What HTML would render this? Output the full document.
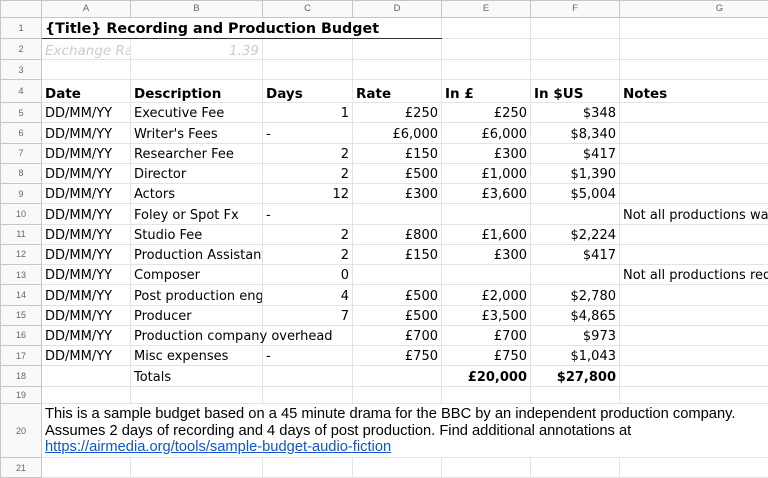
<!DOCTYPE html>
<html><head><meta charset="utf-8"><style>
body{margin:0;width:768px;height:462px;overflow:hidden;background:#fff;font-family:"DejaVu Sans",Verdana,sans-serif;}
table{border-collapse:collapse;table-layout:fixed;width:819px;}
td{border:1px solid #e2e3e3;padding:0 3px;white-space:nowrap;overflow:visible;font-size:13px;color:#000;vertical-align:bottom;line-height:16px;}
td.h{background:#f8f9fa;color:#666;font-size:9px;text-align:center;vertical-align:middle;border-color:#c4c7c5;font-family:"Liberation Sans",sans-serif;padding:0;}
tr.top td{background:#f8f9fa;color:#666;font-size:9.5px;text-align:center;vertical-align:middle;border-color:#c4c7c5;font-family:"Liberation Sans",sans-serif;height:16px;line-height:16px;}
.r{text-align:right}
.clip{overflow:hidden}
.b{font-weight:bold}
.hd td{font-weight:bold;font-size:13.5px;}
.title{font-weight:bold;font-size:14.3px;border-bottom:1.5px solid #333;line-height:18px;}
.ex{color:#ccc;font-style:italic;font-size:13.5px;}
.note{font-family:"Liberation Sans",sans-serif;font-size:14.7px;line-height:16.5px;vertical-align:middle;white-space:nowrap;overflow:hidden;}
a{color:#1155cc;}
</style></head><body>
<table>
<colgroup><col style="width:41px"><col style="width:89px"><col style="width:132px"><col style="width:90px"><col style="width:89px"><col style="width:89px"><col style="width:89px"><col style="width:200px"></colgroup>
<tr class="top"><td></td><td>A</td><td>B</td><td>C</td><td>D</td><td>E</td><td>F</td><td>G</td></tr>
<tr style="height:21px"><td class="h">1</td><td class="title" colspan="4">{Title} Recording and Production Budget</td><td></td><td></td><td></td></tr>
<tr style="height:21px"><td class="h">2</td><td class="ex clip">Exchange Rate</td><td class="ex r">1.39</td><td></td><td></td><td></td><td></td><td></td></tr>
<tr style="height:20px"><td class="h">3</td><td></td><td></td><td></td><td></td><td></td><td></td><td></td></tr>
<tr class="hd" style="height:23px"><td class="h" style="font-weight:normal;font-size:9px">4</td><td>Date</td><td>Description</td><td>Days</td><td>Rate</td><td>In £</td><td>In $US</td><td>Notes</td></tr>
<tr style="height:20.25px"><td class="h">5</td><td>DD/MM/YY</td><td>Executive Fee</td><td class="r">1</td><td class="r">£250</td><td class="r">£250</td><td class="r">$348</td><td></td></tr>
<tr style="height:20.25px"><td class="h">6</td><td>DD/MM/YY</td><td>Writer's Fees</td><td>-</td><td class="r">£6,000</td><td class="r">£6,000</td><td class="r">$8,340</td><td></td></tr>
<tr style="height:20.25px"><td class="h">7</td><td>DD/MM/YY</td><td>Researcher Fee</td><td class="r">2</td><td class="r">£150</td><td class="r">£300</td><td class="r">$417</td><td></td></tr>
<tr style="height:20.25px"><td class="h">8</td><td>DD/MM/YY</td><td>Director</td><td class="r">2</td><td class="r">£500</td><td class="r">£1,000</td><td class="r">$1,390</td><td></td></tr>
<tr style="height:20.25px"><td class="h">9</td><td>DD/MM/YY</td><td>Actors</td><td class="r">12</td><td class="r">£300</td><td class="r">£3,600</td><td class="r">$5,004</td><td></td></tr>
<tr style="height:20.25px"><td class="h">10</td><td>DD/MM/YY</td><td>Foley or Spot Fx</td><td>-</td><td></td><td></td><td></td><td>Not all productions want</td></tr>
<tr style="height:20.25px"><td class="h">11</td><td>DD/MM/YY</td><td>Studio Fee</td><td class="r">2</td><td class="r">£800</td><td class="r">£1,600</td><td class="r">$2,224</td><td></td></tr>
<tr style="height:20.25px"><td class="h">12</td><td>DD/MM/YY</td><td class="clip">Production Assistant</td><td class="r">2</td><td class="r">£150</td><td class="r">£300</td><td class="r">$417</td><td></td></tr>
<tr style="height:20.25px"><td class="h">13</td><td>DD/MM/YY</td><td>Composer</td><td class="r">0</td><td></td><td></td><td></td><td>Not all productions require</td></tr>
<tr style="height:20.25px"><td class="h">14</td><td>DD/MM/YY</td><td class="clip">Post production engineer</td><td class="r">4</td><td class="r">£500</td><td class="r">£2,000</td><td class="r">$2,780</td><td></td></tr>
<tr style="height:20.25px"><td class="h">15</td><td>DD/MM/YY</td><td>Producer</td><td class="r">7</td><td class="r">£500</td><td class="r">£3,500</td><td class="r">$4,865</td><td></td></tr>
<tr style="height:20.25px"><td class="h">16</td><td>DD/MM/YY</td><td>Production company overhead</td><td></td><td class="r">£700</td><td class="r">£700</td><td class="r">$973</td><td></td></tr>
<tr style="height:20.25px"><td class="h">17</td><td>DD/MM/YY</td><td>Misc expenses</td><td>-</td><td class="r">£750</td><td class="r">£750</td><td class="r">$1,043</td><td></td></tr>
<tr style="height:21px"><td class="h">18</td><td></td><td>Totals</td><td></td><td></td><td class="r b">£20,000</td><td class="r b">$27,800</td><td></td></tr>
<tr style="height:15px"><td class="h">19</td><td></td><td></td><td></td><td></td><td></td><td></td><td></td></tr>
<tr style="height:54px"><td class="h">20</td><td colspan="7" class="note">This is a sample budget based on a 45 minute drama for the BBC by an independent production company.<br>Assumes 2 days of recording and 4 days of post production. Find additional annotations at<br><a href="#">https://airmedia.org/tools/sample-budget-audio-fiction</a></td></tr>
<tr style="height:20px"><td class="h">21</td><td></td><td></td><td></td><td></td><td></td><td></td><td></td></tr>
</table>
</body></html>
